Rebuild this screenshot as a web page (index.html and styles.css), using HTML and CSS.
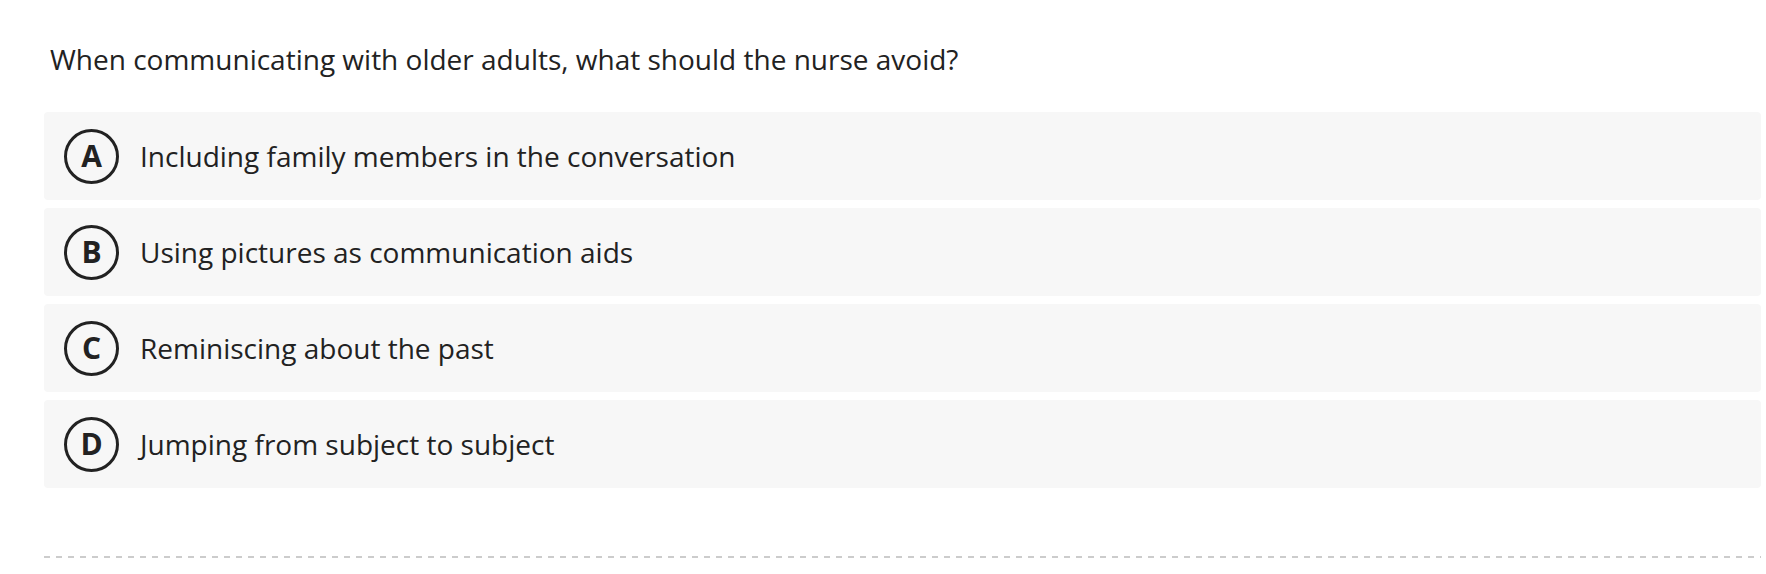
FILE: index.html
```html
<!DOCTYPE html>
<html lang="en">
<head>
<meta charset="utf-8">
<title>Question</title>
<link rel="stylesheet" href="styles.css">
</head>
<body>
<main class="quiz">
  <p class="question">When communicating with older adults, what should the nurse avoid?</p>
  <ul class="options">
    <li class="option"><span class="letter">A</span><span class="text">Including family members in the conversation</span></li>
    <li class="option"><span class="letter">B</span><span class="text">Using pictures as communication aids</span></li>
    <li class="option"><span class="letter">C</span><span class="text">Reminiscing about the past</span></li>
    <li class="option"><span class="letter">D</span><span class="text">Jumping from subject to subject</span></li>
  </ul>
  <div class="divider"></div>
</main>
</body>
</html>
```
FILE: styles.css
```css
html, body {
  margin: 0;
  padding: 0;
  background: #ffffff;
}
body {
  font-family: "Open Sans", "Liberation Sans", sans-serif;
  color: #222222;
}
.quiz {
  padding: 36px 5px 0 44px;
}
.question {
  margin: 0 0 0 6px;
  font-size: 28px;
  line-height: 46px;
}
.options {
  list-style: none;
  margin: 30px 0 0 0;
  padding: 0;
  display: flex;
  flex-direction: column;
  gap: 8px;
}
.option {
  display: flex;
  align-items: center;
  gap: 21px;
  height: 88px;
  padding-left: 20px;
  background: #f7f7f7;
  border-radius: 4px;
}
.letter {
  box-sizing: border-box;
  width: 55px;
  height: 55px;
  border: 3px solid #222222;
  border-radius: 50%;
  display: flex;
  align-items: center;
  justify-content: center;
  font-weight: 700;
  font-size: 30px;
  line-height: 1;
  flex-shrink: 0;
}
.text {
  font-size: 28px;
}
.divider {
  margin-top: 68px;
  height: 2px;
  background: repeating-linear-gradient(to right, #cccccc 0 6px, transparent 6px 12px);
}
```
